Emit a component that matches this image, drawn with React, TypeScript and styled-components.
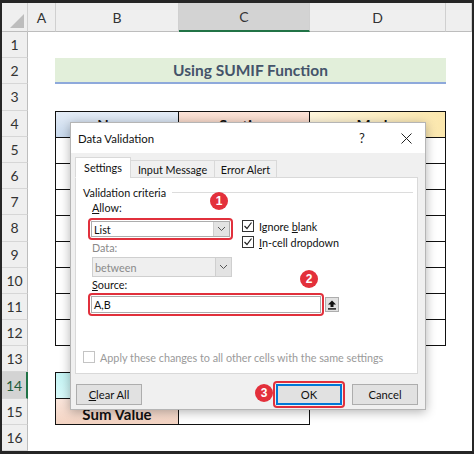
import styled, { createGlobalStyle } from 'styled-components';

const GlobalStyle = createGlobalStyle`
  html, body {
    margin: 0;
    padding: 0;
    background: #262626;
  }
`;

const Frame = styled.div`
  width: 474px;
  height: 454px;
  box-sizing: border-box;
  padding: 3px 2px;
  background: #262626;
`;

const Sheet = styled.div`
  position: relative;
  display: grid;
  grid-template-columns: 26px 28px 123px 131px 136px 1fr;
  grid-template-rows: 29px repeat(16, 1fr);
  width: 470px;
  height: 448px;
  background: #fff;
  font-family: Lato, 'Liberation Sans', sans-serif;
  color: #222;
`;

const Corner = styled.div`
  position: relative;
  background: #efefef;
  border-right: 1px solid #d0d0d0;
  border-bottom: 1px solid #bdbdbd;
  &::after {
    content: '';
    position: absolute;
    right: 3px;
    bottom: 3px;
    border-left: 14px solid transparent;
    border-bottom: 14px solid #bdbdbd;
  }
`;

const ColHeader = styled.div<{ $active?: boolean }>`
  display: flex;
  align-items: center;
  justify-content: center;
  background: ${(p) => (p.$active ? '#d3d3d3' : '#efefef')};
  border-right: 1px solid #d0d0d0;
  border-bottom: ${(p) => (p.$active ? '2px solid #217346' : '1px solid #bdbdbd')};
  font-size: 14px;
  color: #333;
`;

const RowHeader = styled.div<{ $active?: boolean }>`
  display: flex;
  align-items: center;
  justify-content: center;
  background: ${(p) => (p.$active ? '#d3d3d3' : '#efefef')};
  border-right: ${(p) => (p.$active ? '2px solid #217346' : '1px solid #bdbdbd')};
  border-bottom: 1px solid #d6d6d6;
  font-size: 14px;
  color: ${(p) => (p.$active ? '#1f5c3b' : '#333')};
`;

const TitleCell = styled.div`
  grid-column: 3 / 6;
  grid-row: 3;
  margin-left: -1px;
  display: flex;
  align-items: center;
  justify-content: center;
  background: #e2efda;
  border-bottom: 2px solid #8ea9db;
  font-size: 15.5px;
  font-weight: 700;
  color: #44546a;
`;

const Table = styled.div<{ $col: string; $row: string; $cols: string }>`
  grid-column: ${(p) => p.$col};
  grid-row: ${(p) => p.$row};
  margin-left: -1px;
  display: grid;
  grid-template-columns: ${(p) => p.$cols};
  grid-auto-rows: 1fr;
  border-left: 1px solid #111;
  border-top: 1px solid #111;
`;

const TCell = styled.div<{ $bg?: string; $low?: boolean }>`
  display: flex;
  align-items: center;
  justify-content: center;
  background: ${(p) => p.$bg || '#fff'};
  border-right: 1px solid #111;
  border-bottom: 1px solid #111;
  font-size: 15px;
  font-weight: 700;
  color: #111;
  padding-top: ${(p) => (p.$low ? 5 : 2)}px;
`;

/* dialog */

const Dialog = styled.div`
  position: absolute;
  left: 68px;
  top: 119px;
  width: 356px;
  height: 288px;
  box-sizing: border-box;
  display: flex;
  flex-direction: column;
  background: #f0f0f0;
  border: 1px solid #b5b5b5;
  box-shadow: 0 2px 10px rgba(0, 0, 0, 0.3);
  font-family: Lato, 'Noto Sans', sans-serif;
  font-size: 10.8px;
  color: #111;
`;

const TitleBar = styled.div`
  height: 30px;
  flex: none;
  display: flex;
  align-items: center;
  padding-left: 7px;
  background: #fff;
  font-size: 11.4px;
`;

const TitleText = styled.div`
  flex: 1;
`;

const TitleButton = styled.div<{ $w: number }>`
  width: ${(p) => p.$w}px;
  display: flex;
  justify-content: center;
  align-items: center;
  font-size: 13px;
  color: #222;
`;

const Body = styled.div`
  flex: 1;
  display: flex;
  flex-direction: column;
  padding: 5px 7px 0 4px;
`;

const TabRow = styled.div`
  display: flex;
  align-items: flex-end;
  height: 20px;
  position: relative;
  z-index: 1;
  margin-bottom: -1px;
`;

const Tab = styled.div<{ $w: number; $active?: boolean }>`
  width: ${(p) => p.$w}px;
  height: ${(p) => (p.$active ? 21 : 18)}px;
  box-sizing: border-box;
  display: flex;
  align-items: center;
  justify-content: center;
  background: ${(p) => (p.$active ? '#fff' : '#f0f0f0')};
  border: 1px solid #d9d9d9;
  border-bottom: ${(p) => (p.$active ? '1px solid #fff' : '1px solid #d9d9d9')};
  margin-left: ${(p) => (p.$active ? 0 : -1)}px;
`;

const Panel = styled.div`
  height: 197px;
  box-sizing: border-box;
  display: flex;
  flex-direction: column;
  background: #fff;
  border: 1px solid #d9d9d9;
`;

const GroupHeader = styled.div`
  display: flex;
  align-items: center;
  height: 16px;
  margin-top: 6px;
  padding: 0 4px 0 7px;
  &::after {
    content: '';
    flex: 1;
    height: 1px;
    margin-left: 6px;
    background: #dcdcdc;
  }
`;

const Criteria = styled.div`
  display: flex;
  padding-left: 12px;
`;

const LeftCol = styled.div`
  width: 154px;
  display: flex;
  flex-direction: column;
`;

const RightCol = styled.div`
  display: flex;
  flex-direction: column;
  padding-top: 18px;
`;

const Label = styled.div<{ $muted?: boolean }>`
  height: 16px;
  line-height: 16px;
  padding-left: 4px;
  color: ${(p) => (p.$muted ? '#8a8a8a' : '#111')};
`;

const Highlight = styled.div<{ $w?: number }>`
  position: relative;
  width: ${(p) => (p.$w ? `${p.$w}px` : 'auto')};
  box-sizing: border-box;
  border: 2px solid #e1303c;
  border-radius: 4px;
  padding: 1px;
`;

const Combo = styled.div<{ $disabled?: boolean; $w?: number }>`
  height: 16px;
  width: ${(p) => (p.$w ? `${p.$w}px` : 'auto')};
  box-sizing: border-box;
  display: flex;
  align-items: center;
  background: ${(p) => (p.$disabled ? '#efefef' : '#fff')};
  border: 1px solid ${(p) => (p.$disabled ? '#cfcfcf' : '#adadad')};
  color: ${(p) => (p.$disabled ? '#8a8a8a' : '#111')};
`;

const ComboText = styled.div`
  flex: 1;
  padding-left: 2px;
`;

const ArrowBox = styled.div`
  width: 15px;
  height: 100%;
  display: flex;
  align-items: center;
  justify-content: center;
  background: #e3e3e3;
  border-left: 1px solid #cfcfcf;
`;

const CheckRow = styled.div<{ $disabled?: boolean }>`
  height: 16px;
  display: flex;
  align-items: center;
  gap: 5px;
  color: ${(p) => (p.$disabled ? '#9a9a9a' : '#111')};
`;

const Box = styled.div<{ $disabled?: boolean }>`
  width: 12px;
  height: 12px;
  box-sizing: border-box;
  display: flex;
  align-items: center;
  justify-content: center;
  background: #fff;
  border: 1px solid ${(p) => (p.$disabled ? '#c4c4c4' : '#333')};
`;

const SourceRow = styled.div`
  display: flex;
  align-items: center;
  gap: 1px;
  padding-left: 12px;
`;

const PickButton = styled.div`
  width: 14px;
  height: 15px;
  box-sizing: border-box;
  display: flex;
  align-items: center;
  justify-content: center;
  background: #e1e1e1;
  border: 1px solid #adadad;
`;

const ApplyRow = styled.div`
  margin-top: auto;
  margin-bottom: 8px;
  padding-left: 7px;
`;

const ButtonRow = styled.div`
  display: flex;
  align-items: center;
  margin-top: 7px;
  padding-left: 1px;
`;

const Button = styled.div<{ $primary?: boolean }>`
  width: 66px;
  height: 21px;
  box-sizing: border-box;
  display: flex;
  align-items: center;
  justify-content: center;
  background: #e1e1e1;
  border: 1px solid ${(p) => (p.$primary ? '#0078d7' : '#adadad')};
  box-shadow: ${(p) => (p.$primary ? 'inset 0 0 0 1px #0078d7' : 'none')};
  font-size: 11.2px;
`;

const RightButtons = styled.div`
  margin-left: auto;
  display: flex;
  align-items: center;
  gap: 7px;
`;

const Badge = styled.div<{ $left: number; $top: number }>`
  position: absolute;
  left: ${(p) => p.$left}px;
  top: ${(p) => p.$top}px;
  width: 18px;
  height: 18px;
  border-radius: 50%;
  background: #e3303b;
  color: #fff;
  display: flex;
  align-items: center;
  justify-content: center;
  font-family: 'Liberation Sans', Arial, sans-serif;
  font-weight: 700;
  font-size: 12px;
  z-index: 2;
`;

const Chevron = () => (
  <svg width="9" height="6" viewBox="0 0 9 6">
    <polyline points="1,1 4.5,4.5 8,1" fill="none" stroke="#555" strokeWidth="1" />
  </svg>
);

const Check = () => (
  <svg width="10" height="10" viewBox="0 0 10 10">
    <polyline points="1.5,5 4,7.5 8.5,1.5" fill="none" stroke="#222" strokeWidth="1.2" />
  </svg>
);

const CloseIcon = () => (
  <svg width="11" height="11" viewBox="0 0 11 11">
    <path d="M0.5 0.5 L10.5 10.5 M10.5 0.5 L0.5 10.5" stroke="#222" strokeWidth="1" />
  </svg>
);

const UploadIcon = () => (
  <svg width="10" height="10" viewBox="0 0 10 10">
    <path d="M5 0.5 L9 4.5 H6.5 V7 H3.5 V4.5 H1 Z" fill="#111" />
    <rect x="1" y="8.2" width="8" height="1.4" fill="#111" />
  </svg>
);

const cols = ['A', 'B', 'C', 'D', ''];
const rows = Array.from({ length: 16 }, (_, i) => i + 1);

const App = () => {
  return (
    <>
      <GlobalStyle />
      <Frame>
        <Sheet>
          <Corner />
          {cols.map((c) => (
            <ColHeader key={c || 'E'} $active={c === 'C'}>
              {c}
            </ColHeader>
          ))}
          {rows.map((r) => (
            <RowHeader key={r} $active={r === 14} style={{ gridColumn: 1, gridRow: r + 1 }}>
              {r}
            </RowHeader>
          ))}

          <TitleCell>Using SUMIF Function</TitleCell>

          <Table $col="3 / 6" $row="5 / 14" $cols="123px 131px 1fr">
            <TCell $bg="linear-gradient(#e4ecf6, #c9daee)">Name</TCell>
            <TCell $bg="linear-gradient(#fbe3d8, #f3cbb8)">Section</TCell>
            <TCell $bg="linear-gradient(90deg, #fff6dc, #fbe7ad)">Marks</TCell>
            {Array.from({ length: 24 }, (_, i) => (
              <TCell key={i} />
            ))}
          </Table>

          <Table $col="3 / 5" $row="15 / 17" $cols="123px 1fr">
            <TCell $bg="linear-gradient(#c4f4f4, #d8fafa)" />
            <TCell />
            <TCell $bg="linear-gradient(#fbe6dc, #f3d3c2)" $low>
              Sum Value
            </TCell>
            <TCell />
          </Table>

          <Dialog>
            <TitleBar>
              <TitleText>Data Validation</TitleText>
              <TitleButton $w={50}>?</TitleButton>
              <TitleButton $w={38}>
                <CloseIcon />
              </TitleButton>
            </TitleBar>
            <Body>
              <TabRow>
                <Tab $w={56} $active>
                  Settings
                </Tab>
                <Tab $w={85}>Input Message</Tab>
                <Tab $w={63}>Error Alert</Tab>
              </TabRow>
              <Panel>
                <GroupHeader>Validation criteria</GroupHeader>
                <Criteria>
                  <LeftCol>
                    <Label>
                      <u>A</u>llow:
                    </Label>
                    <Highlight $w={145} style={{ marginTop: 2 }}>
                      <Combo>
                        <ComboText>List</ComboText>
                        <ArrowBox>
                          <Chevron />
                        </ArrowBox>
                      </Combo>
                      <Badge $left={120} $top={-28}>
                        1
                      </Badge>
                    </Highlight>
                    <Label $muted>Data:</Label>
                    <Combo $disabled $w={140} style={{ marginTop: 1, marginLeft: 4, height: 20 }}>
                      <ComboText>between</ComboText>
                      <ArrowBox>
                        <Chevron />
                      </ArrowBox>
                    </Combo>
                  </LeftCol>
                  <RightCol>
                    <CheckRow>
                      <Box>
                        <Check />
                      </Box>
                      <span>
                        Ignore <u>b</u>lank
                      </span>
                    </CheckRow>
                    <CheckRow>
                      <Box>
                        <Check />
                      </Box>
                      <span>
                        <u>I</u>n-cell dropdown
                      </span>
                    </CheckRow>
                  </RightCol>
                </Criteria>
                <Label style={{ paddingLeft: 16 }}>
                  <u>S</u>ource:
                </Label>
                <SourceRow>
                  <Highlight $w={236}>
                    <Combo style={{ height: 17 }}>
                      <ComboText>A,B</ComboText>
                    </Combo>
                    <Badge $left={210} $top={-25}>
                      2
                    </Badge>
                  </Highlight>
                  <PickButton>
                    <UploadIcon />
                  </PickButton>
                </SourceRow>
                <ApplyRow>
                  <CheckRow $disabled>
                    <Box $disabled />
                    <span>Apply these changes to all other cells with the same settings</span>
                  </CheckRow>
                </ApplyRow>
              </Panel>
              <ButtonRow>
                <Button>
                  <span>
                    <u>C</u>lear All
                  </span>
                </Button>
                <RightButtons>
                  <Highlight>
                    <Button $primary>OK</Button>
                    <Badge $left={-20} $top={1}>
                      3
                    </Badge>
                  </Highlight>
                  <Button>Cancel</Button>
                </RightButtons>
              </ButtonRow>
            </Body>
          </Dialog>
        </Sheet>
      </Frame>
    </>
  );
};

export default App;
